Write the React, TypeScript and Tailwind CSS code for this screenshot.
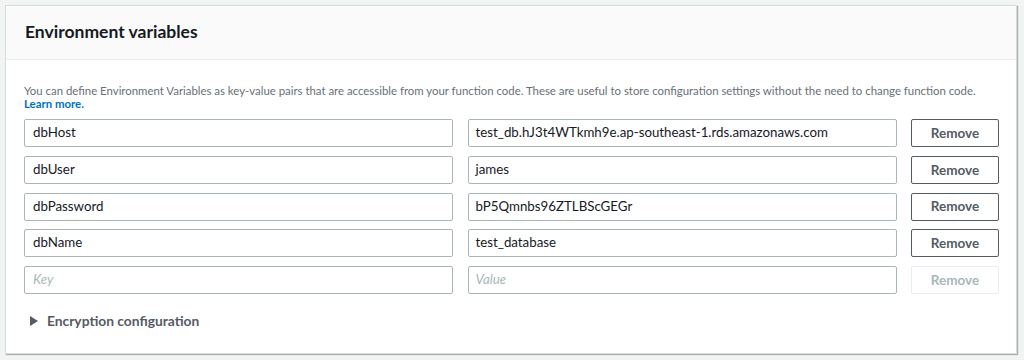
import React from "react";

const rows = [
  { k: "dbHost", v: "test_db.hJ3t4WTkmh9e.ap-southeast-1.rds.amazonaws.com" },
  { k: "dbUser", v: "james" },
  { k: "dbPassword", v: "bP5Qmnbs96ZTLBScGEGr" },
  { k: "dbName", v: "test_database" },
];

export default function App() {
  return (
    <div
      className="w-[1024px] h-[360px] bg-[#f2f3f3] pt-[5px] pl-[5px] pr-[7px]"
      style={{ fontFamily: "Lato, 'Open Sans', sans-serif" }}
    >
      <div className="h-[349px] bg-white border border-[#d5dbdb] shadow-[1px_1px_1px_0_rgba(0,28,36,0.3)] flex flex-col">
        <div className="h-[54px] bg-[#fafafa] border-b border-[#eaeded] flex items-center pl-[19px]">
          <h2 className="text-[17.5px] font-bold text-[#16191f]">Environment variables</h2>
        </div>
        <div className="pl-[18px] pr-[17px] pt-[24px]">
          <p className="text-[11.4px] leading-[13px] text-[#687078]">
            You can define Environment Variables as key-value pairs that are accessible from your function code. These are useful to store configuration settings without the need to change function code.{" "}
            <br />
            <a className="text-[#0073bb] font-bold">Learn more.</a>
          </p>
          <div className="mt-[9px] grid grid-cols-[1fr_1fr_88px] gap-x-[14.5px] gap-y-[8.75px]">
            {rows.map((r) => (
              <React.Fragment key={r.k}>
                <div className="h-[28px] border border-[#aab7b8] rounded-[2px] flex items-center px-[8px] text-[13.3px] text-[#16191f]">
                  {r.k}
                </div>
                <div className="h-[28px] border border-[#aab7b8] rounded-[2px] flex items-center px-[7px] text-[13.3px] text-[#16191f]">
                  {r.v}
                </div>
                <button className="h-[28px] border border-[#545b64] rounded-[2px] text-[13.5px] font-bold text-[#545b64] bg-white">
                  Remove
                </button>
              </React.Fragment>
            ))}
            <div className="h-[28px] border border-[#aab7b8] rounded-[2px] flex items-center px-[8px] text-[13.3px] italic text-[#aab7b8]">
              Key
            </div>
            <div className="h-[28px] border border-[#aab7b8] rounded-[2px] flex items-center px-[7px] text-[13.3px] italic text-[#aab7b8]">
              Value
            </div>
            <button className="h-[28px] border border-[#eaeded] rounded-[2px] text-[13.5px] font-bold text-[#aab7b8] bg-white">
              Remove
            </button>
          </div>
          <div className="mt-[17px] flex items-center pl-[6px] text-[13.8px] font-bold text-[#545b64]">
            <svg width="8" height="10" viewBox="0 0 8 10" className="mr-[9px]">
              <path d="M0 0 L8 5 L0 10 Z" fill="#545b64" />
            </svg>
            Encryption configuration
          </div>
        </div>
      </div>
    </div>
  );
}
